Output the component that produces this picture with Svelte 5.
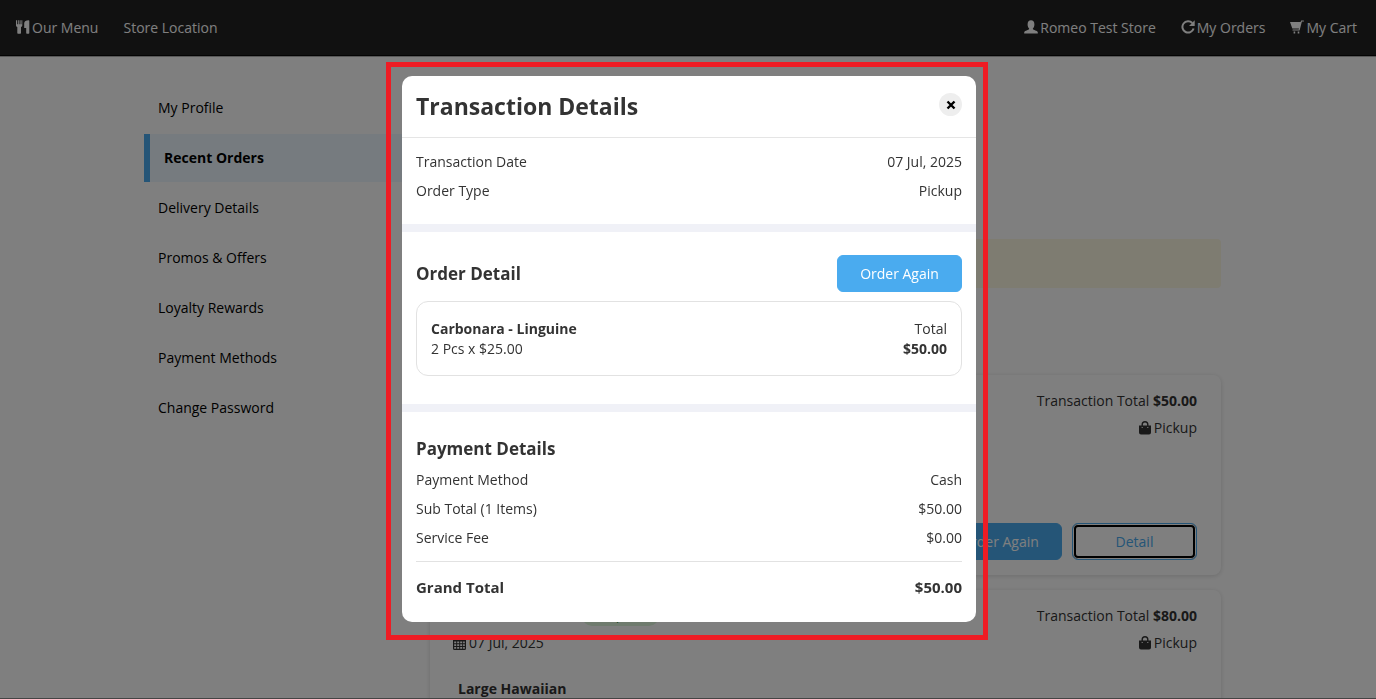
<script lang="ts">
	const menuItems = [
		'My Profile',
		'Recent Orders',
		'Delivery Details',
		'Promos & Offers',
		'Loyalty Rewards',
		'Payment Methods',
		'Change Password'
	];

	let activeItem = $state('Recent Orders');

	const info = [
		{ label: 'Transaction Date', value: '07 Jul, 2025' },
		{ label: 'Order Type', value: 'Pickup' }
	];

	const payment = [
		{ label: 'Payment Method', value: 'Cash' },
		{ label: 'Sub Total (1 Items)', value: '$50.00' },
		{ label: 'Service Fee', value: '$0.00' }
	];
</script>

{#snippet pickup()}
	<p class="order-type">
		<svg class="bag-icon" viewBox="0 0 14 14">
			<path class="line" d="M4.2 6V3.600a2.800 2.800 0 0 1 5.600 0V6" />
			<path
				fill-rule="evenodd"
				d="M1 4.600h12v7a2 2 0 0 1-2 2H3a2 2 0 0 1-2-2zM4.200 5.600a.7.7 0 1 0 0 1.400.7.7 0 0 0 0-1.400zM9.800 5.600a.7.7 0 1 0 0 1.400.7.7 0 0 0 0-1.400z"
			/>
		</svg>
		Pickup
	</p>
{/snippet}

<div class="page">
	<nav class="navbar">
		<div class="nav-group">
			<a href="#menu">
				<svg viewBox="0 0 14 14">
					<path
						d="M0 .3h1v4h.8v-4h1v4h.8v-4h1v4h.8v-4h.9v5c0 1-.6 1.500-1.300 1.800V13q0 .7-.7.7H2q-.7 0-.7-.7V7.100C.600 6.800 0 6.300 0 5.300zM13.300.8V13q0 .7-.7.700h-1.700q-.7 0-.7-.7V8H8.200V3.300C8.200 1.200 10 .3 12.600.3q.7 0 .7.5z"
					/>
				</svg>
				Our Menu
			</a>
			<a href="#location">Store Location</a>
		</div>
		<div class="nav-group">
			<a href="#profile">
				<svg viewBox="0 0 14 14">
					<path
						d="M.2 13.600v-1c0-1 .6-1.400 1.800-1.900l2.700-1.100c.5-.2.6-.9.2-1.300C4 7.300 3.600 6 3.600 4.200 3.600 1.700 4.900.3 7 .3s3.400 1.400 3.400 3.900c0 1.800-.4 3.100-1.300 4.100-.4.4-.3 1.100.2 1.300l2.700 1.100c1.200.5 1.800.9 1.800 1.900v1z"
					/>
				</svg>
				Romeo Test Store
			</a>
			<a href="#orders">
				<svg viewBox="0 0 14 14">
					<path class="stroke" d="M11.300 3A5.700 5.700 0 1 0 12.600 8.500" />
					<path d="M13.700.2v5.700H8z" />
				</svg>
				My Orders
			</a>
			<a href="#cart">
				<svg viewBox="0 0 14 14">
					<path
						d="M0 2h10.600l.5-1.600h2.500q.4 0 .4.500t-.4.500h-1.700L9.600 10.400H2.900q-.5 0-.5-.5t.5-.5h5.800l.3-1H2.300zM3.600 11.600h1.600v1.800H3.600zM7.700 11.600h1.600v1.800H7.700z"
					/>
				</svg>
				My Cart
			</a>
		</div>
	</nav>

	<div class="container">
		<aside class="sidebar">
			{#each menuItems as item}
				<a
					href="#account"
					class="side-link"
					class:active={item === activeItem}
					onclick={() => (activeItem = item)}>{item}</a
				>
			{/each}
		</aside>

		<main class="orders">
			<div class="notice"></div>

			<article class="order-card">
				<div class="order-top">
					<div class="order-summary">
						<p>Transaction Total <strong>$50.00</strong></p>
						{@render pickup()}
					</div>
				</div>
				<div class="order-actions">
					<button class="btn">Order Again</button>
					<button class="btn outline focused">Detail</button>
				</div>
			</article>

			<article class="order-card">
				<div class="order-top">
					<div class="order-meta">
						<span class="badge">Completed</span>
						<p class="order-date">
							<svg class="calendar-icon" viewBox="0 0 13 13">
								<path
									fill-rule="evenodd"
									d="M3 0h1.500v1.500h4V0H10v1.500h1.500a1.500 1.500 0 0 1 1.500 1.500v8.500a1.500 1.500 0 0 1-1.500 1.500h-10A1.500 1.500 0 0 1 0 11.500V3a1.500 1.500 0 0 1 1.500-1.500H3zM1.200 4.500v1.800h2V4.500zM4.200 4.500v1.800h2V4.500zM7.200 4.500v1.800h2V4.500zM10.100 4.500v1.800h1.700V4.500zM1.200 7.300v1.800h2V7.300zM4.200 7.300v1.800h2V7.300zM7.200 7.300v1.800h2V7.300zM10.100 7.300v1.800h1.700V7.300zM1.200 10.100v1.700h2v-1.700zM4.200 10.100v1.700h2v-1.700zM7.200 10.100v1.700h2v-1.700zM10.100 10.100v1.700h1.700v-1.700z"
								/>
							</svg>
							07 Jul, 2025
						</p>
						<p class="order-item">Large Hawaiian</p>
					</div>
					<div class="order-summary">
						<p>Transaction Total <strong>$80.00</strong></p>
						{@render pickup()}
					</div>
				</div>
			</article>
		</main>
	</div>
</div>

<div class="overlay">
	<div class="frame">
		<div class="modal" role="dialog" aria-modal="true" aria-labelledby="modal-title">
			<header class="modal-header">
				<h2 id="modal-title">Transaction Details</h2>
				<button class="close" aria-label="Close">
					<svg viewBox="0 0 10 10"><path d="M1.500 1.500l7 7M8.500 1.500l-7 7" /></svg>
				</button>
			</header>

			<section class="info">
				{#each info as row}
					<div class="row"><span>{row.label}</span><span>{row.value}</span></div>
				{/each}
			</section>

			<section class="detail">
				<div class="detail-head">
					<h3>Order Detail</h3>
					<button class="btn">Order Again</button>
				</div>
				<div class="item-card">
					<div>
						<strong>Carbonara - Linguine</strong>
						<p class="qty">2 Pcs x $25.00</p>
					</div>
					<div class="item-total">
						<p>Total</p>
						<strong>$50.00</strong>
					</div>
				</div>
			</section>

			<section class="payment">
				<h3>Payment Details</h3>
				{#each payment as row}
					<div class="row"><span>{row.label}</span><span>{row.value}</span></div>
				{/each}
				<div class="grand-total"><span>Grand Total</span><span>$50.00</span></div>
			</section>
		</div>
	</div>
</div>

<style>
	:global(body) {
		margin: 0;
		background: #fff;
		color: #333;
		font-family: 'Open Sans', 'Noto Sans', sans-serif;
		font-size: 14px;
		line-height: 20px;
	}
	p,
	h2,
	h3 {
		margin: 0;
	}
	a {
		text-decoration: none;
	}
	svg {
		fill: currentColor;
	}
	strong {
		font-weight: 700;
	}
	.page {
		height: 100vh;
		overflow: hidden;
	}

	/* Top bar */
	.navbar {
		display: flex;
		justify-content: space-between;
		box-sizing: border-box;
		height: 56px;
		padding: 0 19px 0 16px;
		background: #222;
		border-bottom: 1px solid #080808;
		box-shadow: 0 1px 0 #b0b0b0;
	}
	.nav-group {
		display: flex;
		align-items: center;
		gap: 25px;
	}
	.nav-group a {
		display: flex;
		align-items: center;
		gap: 2px;
		color: #fff;
	}
	.nav-group svg {
		width: 14px;
		height: 14px;
		margin-bottom: 2px;
	}
	.stroke {
		fill: none;
		stroke: currentColor;
		stroke-width: 2;
	}

	/* Account layout */
	.container {
		display: flex;
		gap: 15px;
		box-sizing: border-box;
		max-width: 1088px;
		margin: 0 auto;
		padding-right: 11px;
	}
	.sidebar {
		display: flex;
		flex-direction: column;
		gap: 2px;
		flex: 0 0 271px;
		padding-top: 28px;
	}
	.side-link {
		padding: 14px;
		color: #000;
	}
	.side-link.active {
		border-left: 6px solid #4aabef;
		background: #edf7fe;
		font-weight: 700;
	}
	.orders {
		flex: 1;
		padding-top: 183px;
	}
	.notice {
		height: 49px;
		margin-bottom: 87px;
		border-radius: 4px;
		background: #fcf8e3;
	}
	.order-card {
		display: flex;
		flex-direction: column;
		justify-content: space-between;
		box-sizing: border-box;
		min-height: 200px;
		margin-bottom: 15px;
		padding: 16px 24px 15px 23px;
		border-radius: 8px;
		box-shadow: 0 1px 5px rgba(0, 0, 0, 0.15);
	}
	.order-top {
		display: flex;
		justify-content: space-between;
	}
	.order-summary {
		display: flex;
		flex-direction: column;
		gap: 7px;
		margin-left: auto;
		text-align: right;
	}
	.order-type,
	.order-date {
		display: flex;
		align-items: center;
		gap: 2px;
	}
	.order-type {
		justify-content: flex-end;
	}
	.bag-icon {
		width: 14px;
		height: 14px;
	}
	.line {
		fill: none;
		stroke: currentColor;
		stroke-width: 1.4;
	}
	.calendar-icon {
		width: 13px;
		height: 13px;
		margin-right: 1px;
	}
	.order-meta {
		display: flex;
		flex-direction: column;
	}
	.badge {
		align-self: flex-end;
		margin-left: 129px;
		padding: 0 8px;
		border-radius: 10px;
		background: #dff6dd;
		color: #2b8a3e;
		font-size: 12px;
	}
	.order-date {
		margin-top: 7px;
	}
	.order-item {
		margin-top: 26px;
		padding-left: 5px;
		font-weight: 700;
	}
	.order-actions {
		display: flex;
		justify-content: flex-end;
		gap: 10px;
	}

	.btn {
		box-sizing: border-box;
		min-width: 125px;
		height: 37px;
		padding: 0 16px;
		border: 1px solid #4aabef;
		border-radius: 6px;
		background: #4aabef;
		color: #fff;
		font: inherit;
		cursor: pointer;
	}
	.btn.outline {
		background: #fff;
		color: #4aabef;
	}
	.btn.focused {
		box-shadow:
			inset 0 0 0 1px #fff,
			inset 0 0 0 3px #000;
	}

	/* Modal */
	.overlay {
		position: fixed;
		inset: 0;
		display: flex;
		justify-content: center;
		align-items: flex-start;
		padding: 62px 2px 0 0;
		border-bottom: 1px solid #444;
		background: rgba(0, 0, 0, 0.5);
	}
	.frame {
		box-sizing: border-box;
		width: 100%;
		max-width: 602px;
		padding: 9px 7px 13px 11px;
		border: 5px solid #ee1c24;
	}
	.modal {
		overflow: hidden;
		border-radius: 10px;
		background: #fff;
	}
	.modal-header {
		display: flex;
		justify-content: space-between;
		align-items: center;
		padding: 14px;
		border-bottom: 1px solid #e5e5e5;
	}
	h2 {
		font-size: 23px;
		line-height: 33px;
	}
	.close {
		display: flex;
		align-items: center;
		justify-content: center;
		width: 23px;
		height: 23px;
		margin-bottom: 4px;
		padding: 0;
		border: 0;
		border-radius: 50%;
		background: #eee;
		color: #000;
		cursor: pointer;
	}
	.close svg {
		width: 10px;
		height: 10px;
		stroke: currentColor;
		stroke-width: 2.4;
	}
	h3 {
		font-size: 17px;
		line-height: 25px;
	}
	.row {
		display: flex;
		justify-content: space-between;
		line-height: 29px;
	}
	.info {
		padding: 9px 14px 19px;
		border-bottom: 8px solid #f0f1f7;
	}
	.detail {
		padding: 23px 14px 28px;
		border-bottom: 8px solid #f0f1f7;
	}
	.detail-head {
		display: flex;
		justify-content: space-between;
		align-items: center;
		margin-bottom: 9px;
	}
	.item-card {
		display: flex;
		justify-content: space-between;
		padding: 17px 14px 16px;
		border: 1px solid #e2e2e2;
		border-radius: 12px;
	}
	.item-total {
		text-align: right;
	}
	.qty {
		font-weight: 500;
	}
	.payment {
		padding: 24px 14px 23px;
	}
	.payment h3 {
		margin-bottom: 4px;
	}
	.grand-total {
		display: flex;
		justify-content: space-between;
		margin-top: 9px;
		padding-top: 13px;
		border-top: 1px solid #e2e2e2;
		font-size: 15px;
		font-weight: 700;
		line-height: 24px;
	}
</style>
